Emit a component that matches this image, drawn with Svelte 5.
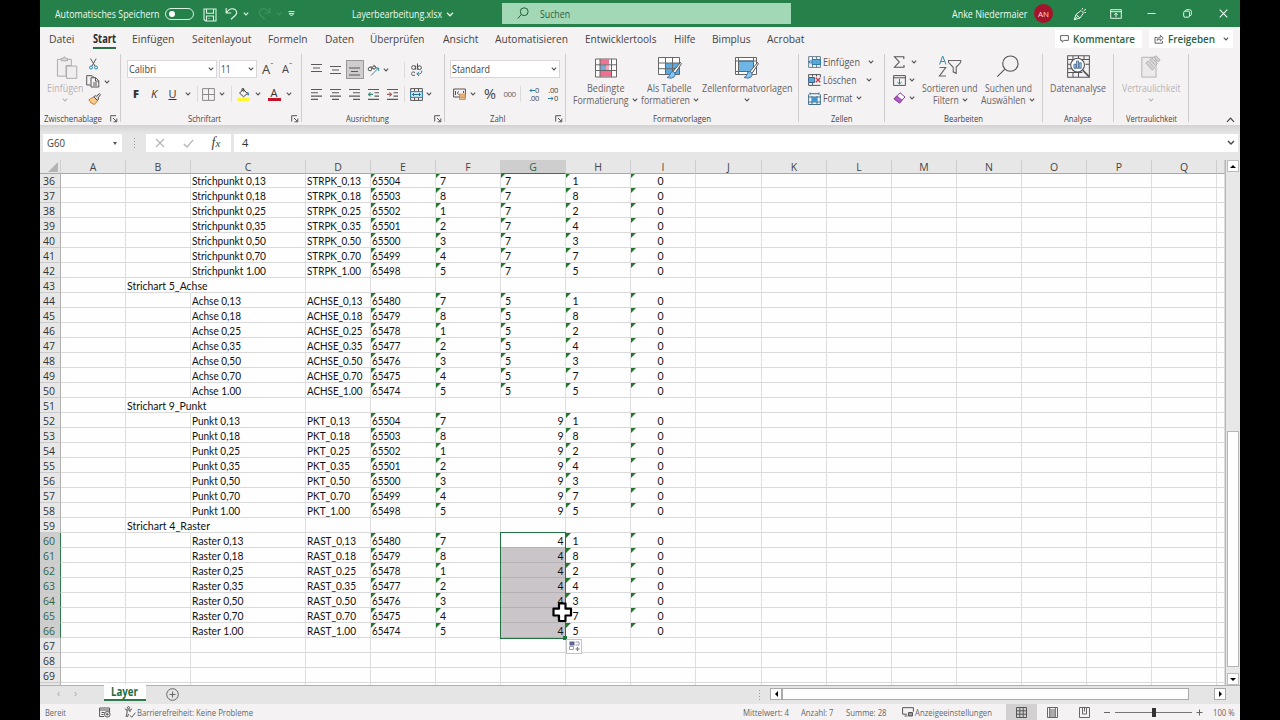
<script>
  // Narrows or widens a label horizontally so it spans the given width.
  function fit(node, w) {
    if (!w) return;
    const cur = node.getBoundingClientRect().width;
    node.style.width = w + 'px';
    node.style.transform = `scaleX(${(w / cur).toFixed(4)})`;
  }

  const tabs = [
    ['Datei', 25.5], ['Start', 23], ['Einfügen', 42.5], ['Seitenlayout', 59.5], ['Formeln', 39.5],
    ['Daten', 29], ['Überprüfen', 54.5], ['Ansicht', 35.5], ['Automatisieren', 73], ['Entwicklertools', 71.5],
    ['Hilfe', 21.5], ['Bimplus', 38.5], ['Acrobat', 37.5]
  ];

  const cols = 'ABCDEFGHIJKLMNOPQ'.split('');
  const sizes = ['0,13', '0.18', '0.25', '0.35', '0.50', '0.70', '1.00'];
  const fs = ['7', '8', '1', '2', '3', '4', '5'];
  const hs = ['1', '8', '2', '4', '3', '7', '5'];
  const e1 = ['65504', '65503', '65502', '65501', '65500', '65499', '65498'];
  const e2 = ['65480', '65479', '65478', '65477', '65476', '65475', '65474'];

  function block(start, name, cw, code, dw, es, g, textG) {
    return sizes.map((s, i) => ({
      n: start + i, c: name + ' ' + (i < 6 ? s.replace('.', ',') : s), cw, d: code + '_' + s, dw,
      e: es[i], f: fs[i], g, textG, h: hs[i], i: '0', sel: start === 60, first: start === 60 && i === 0
    }));
  }
  const rows = [
    ...block(36, 'Strichpunkt', 74, 'STRPK', 54, e1, '7', true),
    { n: 43, b: 'Strichart 5_Achse', bw: 80.5 },
    ...block(44, 'Achse', 49, 'ACHSE', 55.5, e2, '5', true),
    { n: 51, b: 'Strichart 9_Punkt', bw: 79.5 },
    ...block(52, 'Punkt', 48, 'PKT', 43, e1, '9', false),
    { n: 59, b: 'Strichart 4_Raster', bw: 83 },
    ...block(60, 'Raster', 51.5, 'RAST', 49, e2, '4', false),
    { n: 67 }, { n: 68 }, { n: 69 }, { n: '' }
  ];
  const blanks = [0, 1, 2, 3, 4, 5, 6, 7, 8];
</script>

{#snippet t(text, w, cls = '')}<span class="t {cls}" use:fit={w}>{text}</span>{/snippet}
{#snippet chev()}<svg class="chev" width="6" height="4" viewBox="0 0 6 4"><path d="M.8.7 3 2.9 5.2.7" fill="none" stroke="currentColor" stroke-width="1.1" /></svg>{/snippet}
{#snippet launcher()}<svg class="launch" width="8" height="8" viewBox="0 0 8 8"><path d="M.7 6.5V.7H6M3 3l3.600 3.600M6.800 3.500v3.300H3.600" fill="none" stroke="#555" /></svg>{/snippet}
{#snippet lines(a, b, c)}<svg width="13" height="13" viewBox="0 0 13 13"><path d={a} stroke="#5a5859" stroke-width="1.1" fill="none" />{#if b}<path d={b} stroke={c} stroke-width="1.1" fill="none" />{/if}</svg>{/snippet}
{#snippet tri()}<i class="tri"></i>{/snippet}

<div class="stage">
  <div class="app">
    <header class="title">
      <div class="tl">
        {@render t('Automatisches Speichern', 104.5)}
        <span class="toggle"></span>
        <svg class="save" width="14" height="14" viewBox="0 0 14 14" fill="none" stroke="#d9f3e2" stroke-width="1.1"><path d="M1 1h12v12H2.500L1 11.500zM3.500 1v4.300h7V1M3.500 13V8h7v5M5.500 10.500h1" /></svg>
        <svg class="undo" width="13" height="13" viewBox="0 0 13 13" fill="none" stroke="#d9f3e2" stroke-width="1.2"><path d="M1.200 1v5h5M1.500 5.800C3.500 2.500 6 1.300 8.500 1.900c3.500.9 4 4.300 2 6.300L6 12.300" /></svg>
        <span class="c1">{@render chev()}</span>
        <svg class="redo" width="13" height="13" viewBox="0 0 13 13" fill="none" stroke="#41925f" stroke-width="1.2"><path d="M11.800 1v5h-5M11.500 5.800C9.500 2.500 7 1.300 4.500 1.900c-3.500.9-4 4.300-2 6.300L7 12.300" /></svg>
        <span class="c2">{@render chev()}</span>
        <svg class="qat" width="7" height="6" viewBox="0 0 7 6" fill="none" stroke="#d9f3e2"><path d="M.5.600h6M1.200 2.600h4.600L3.500 5z" /></svg>
      </div>
      <div class="file">{@render t('Layerbearbeitung.xlsx', 90)}<svg width="8" height="5" viewBox="0 0 8 5"><path d="M1 .8 4 3.800 7 .8" fill="none" stroke="#e4f6ea" stroke-width="1.300" /></svg></div>
      <div class="search">
        <svg width="12" height="13" viewBox="0 0 12 13" fill="none" stroke="#1f5f38"><circle cx="7.200" cy="4.700" r="3.900" /><path d="M4.300 7.500.8 11.500" /></svg>
        {@render t('Suchen', 30)}
      </div>
      <div class="user">{@render t('Anke Niedermaier', 75.5)}<span class="avatar">AN</span></div>
      <div class="winbtns">
        <svg width="14" height="14" viewBox="0 0 14 14" fill="none" stroke="#e4f6ea"><path d="M1.200 12.800 3 7.500 8 3.500l2.500 2.500-3.500 5zM3 7.500l4 3.500M1.200 12.800l3.500-3.300M9 2.500l.8-1.500M10.500 4l2.500-2M11.500 5.500h1.500" /></svg>
        <svg width="12" height="10" viewBox="0 0 12 10" fill="none" stroke="#e4f6ea"><path d="M.7.700h10.600v8.600H.7zM.7 2.700h10.600M6 8.200V4.300M4.200 5.900 6 4.200l1.800 1.700" /></svg>
        <svg width="9" height="3" viewBox="0 0 9 3" stroke="#e4f6ea"><path d="M.5 1.500h8" /></svg>
        <svg width="9" height="9" viewBox="0 0 9 9" fill="none" stroke="#e4f6ea"><rect x=".7" y="2.200" width="5.800" height="6" rx="1.200" /><path d="M2.500 2V1.500Q2.600.7 3.500.7h3q1.800 0 1.800 1.800v3q0 1-1.200 1.200" /></svg>
        <svg width="9" height="9" viewBox="0 0 9 9" stroke="#f0fff5" stroke-width="1.100"><path d="m.7.700 7.600 7.600M8.300.7.700 8.300" /></svg>
      </div>
    </header>

    <nav class="tabs">
      {#each tabs as [name, w]}<div class:active={name === 'Start'}>{@render t(name, w)}</div>{/each}
      <button class="share kom"><svg width="9" height="8" viewBox="0 0 9 8" fill="none" stroke="#666"><path d="M.6.600h7.800v4.800H4L2.200 7.200V5.400H.6z" /></svg>{@render t('Kommentare', 62)}</button>
      <button class="share frei"><svg width="10" height="10" viewBox="0 0 10 10" fill="none" stroke="#666"><path d="M3.500 3.500H1v5.700h7.500V7M3 6.500C3.300 4.500 4.500 3.500 6.300 3.500V1.200L9.300 4.200l-3 2.800V5.200C5 5.200 4 5.500 3 6.500z" /></svg>{@render t('Freigeben', 47)}<span class="fc">{@render chev()}</span></button>
    </nav>

    <section class="ribbon">
      <div class="group g1">
        <div class="body clip">
          <div class="big dis">
            <svg width="22" height="24" viewBox="0 0 22 24" fill="#f0eeef" stroke="#a9a7a8"><path d="M1 3.500h14.500V10H10v11H1z" /><path d="M5 5V2.500h1.800Q8.200-.8 9.700 2.500h1.800V5z" fill="#d8d6d7" /><path d="M10.500 10.500h10.700v12.800H10.500z" /></svg>
            {@render t('Einfügen', 36.5)}
            {@render chev()}
          </div>
          <div class="stack">
            <svg width="9" height="12" viewBox="0 0 9 12" fill="none" stroke="#555"><path d="M1.500.6 6 8M7.200.6 3 8" /><circle cx="2" cy="9.500" r="1.500" stroke="#2b83b5" /><circle cx="7" cy="9.500" r="1.500" stroke="#2b83b5" /></svg>
            <div><svg width="14" height="13" viewBox="0 0 14 13" fill="none" stroke="#555"><path d="M4.500 10H.7V.7h5.500l2 2" /><path d="M5 2.700h4.800l3 3V12H5zM9.500 2.900v3.200h3.200M7 8h4M7 10h4" /></svg>{@render chev()}</div>
            <svg width="13" height="12" viewBox="0 0 13 12"><path d="m.8 6.800 5-3 3.800 4-3.200 3.700Q2.800 11 .8 6.800z" fill="#f6c98e" stroke="#c98235" /><path d="m5.800 3.800 1.500-1.200 1.200.5L11.500.6l1 1L10.200 4.800l.4 1.200-1.100 1.500z" fill="#ddd" stroke="#555" /></svg>
          </div>
        </div>
        <div class="glabel">{@render t('Zwischenablage', 58)}{@render launcher()}</div>
      </div>

      <div class="group g2">
        <div class="body two">
          <div class="r">
            <span class="combo w90">{@render t('Calibri', 27)}{@render chev()}</span>
            <span class="combo w38">{@render t('11', 9.500)}{@render chev()}</span>
            <b class="fa">A<sup>ˆ</sup></b><b class="fb">A<sup>ˇ</sup></b>
          </div>
          <div class="r fontrow">
            <b>F</b><i>K</i><u>U</u>{@render chev()}<s></s>
            <svg width="13" height="13" viewBox="0 0 13 13" fill="none" stroke="#8a8889"><path d="M.6.600h11.800v11.800H.6zM6.500.6v12M.6 6.500h12" /></svg>
            {@render chev()}<s></s>
            <svg width="13" height="13" viewBox="0 0 13 13"><path d="m2.500 5 4-3.500 3.800 4-3.800 3.300zM5 3V.8q1-.8 1.800 0v3" fill="none" stroke="#444" /><path d="m10.500 4.200 1 3" stroke="#2b6cb0" stroke-width="1.500" /><path d="M.5 9.800h12V13H.5z" fill="#fdf733" /></svg>
            {@render chev()}
            <span class="fcol">A</span>
            {@render chev()}
          </div>
        </div>
        <div class="glabel">{@render t('Schriftart', 33)}{@render launcher()}</div>
      </div>

      <div class="group g3">
        <div class="body two">
          <div class="r alrow">
            {@render lines('M1 1.500h11M3 5h7M1 8.500h11')}
            {@render lines('M1 3.500h11M3 7h7M1 10.500h11')}
            <span class="on">{@render lines('M1 5h11M3 8.500h7M1 12h11')}</span>
            <svg width="13" height="12" viewBox="0 0 13 12" fill="none" stroke="#555"><circle cx="3" cy="5" r="1.800" /><path d="M3.500 2 6.500 5M6.500.8l3 3" /><circle cx="7" cy="3.600" r="1.500" /><path d="m4 11.500 7.500-7.500M8.500 4h3.200v3" stroke="#3c8a8f" /></svg>
            {@render chev()}<s></s>
            <svg width="13" height="14" viewBox="0 0 13 14" fill="none" stroke="#555"><circle cx="3.500" cy="4.500" r="1.900" /><path d="M5.700 2.500v4.300M7.500.5v6.300M5 9.500Q2 8 1.500 10.700 2 13.500 5 12" /><circle cx="9.500" cy="4.700" r="1.900" /><path d="M11.800 7.500q.6 3.800-4.500 3.500M9 8.800 6.800 11 9 13" stroke="#2b7fa8" /></svg>
          </div>
          <div class="r alrow">
            {@render lines('M1 1.500h11M1 4.800h7M1 8.100h11M1 11.400h7')}
            {@render lines('M1 1.500h11M3 4.800h7M1 8.100h11M3 11.400h7')}
            {@render lines('M1 1.500h11M5 4.800h7M1 8.100h11M5 11.400h7')}
            {@render lines('M1 1.500h11M7.500 4.800H12M7.500 8.100H12M1 11.400h11', 'M1.500 6.400H6M3.500 4.400l-2 2 2 2', '#3c8a7a')}
            {@render lines('M1 1.500h11M7.500 4.800H12M7.500 8.100H12M1 11.400h11', 'M1 6.400h4.500M3.500 4.400l2 2-2 2', '#a05c5c')}
            <s></s>
            <svg width="13" height="13" viewBox="0 0 13 13" fill="none"><path d="M.6.600h11.800v11.800H.6zM4.500.6v3M8.500.6v3M4.500 9.500v3M8.500 9.500v3" stroke="#555" /><path d="M.6 3.600h11.800v5.800H.6z" fill="#cfe8f3" stroke="#2b7fa8" /><path d="M2.500 6.500h8M4 5 2.500 6.500 4 8M9 5l1.500 1.500L9 8" stroke="#2b6f98" /></svg>
            {@render chev()}
          </div>
        </div>
        <div class="glabel">{@render t('Ausrichtung', 43)}{@render launcher()}</div>
      </div>

      <div class="group g4">
        <div class="body two">
          <div class="r"><span class="combo w110">{@render t('Standard', 38)}{@render chev()}</span></div>
          <div class="r numrow">
            <svg width="13" height="12" viewBox="0 0 13 12" fill="none"><path d="M.6 1h11.800v8H.6z" stroke="#555" /><path d="M2.500 3v4M5.500 3.300q-2 1.700 0 3.400M10.500 3v2" stroke="#555" /><path d="M6.500 6.200h5.800v5.200H6.500zM6.500 8h5.800M6.500 9.700h5.800" fill="#f9d9b2" stroke="#d28844" /></svg>
            {@render chev()}<span class="pct">%</span><span class="ooo">000</span><s></s>
            <span class="dec"><span><svg width="6" height="5" viewBox="0 0 6 5"><path d="M6 2.500H1M2.700.8 1 2.500l1.700 1.700" fill="none" stroke="#2b7fa8" /></svg>0</span><span>.00</span></span>
            <span class="dec"><span>.00</span><span><svg width="6" height="5" viewBox="0 0 6 5"><path d="M0 2.500h5M3.300.8 5 2.500 3.300 4.200" fill="none" stroke="#2b7fa8" /></svg>0</span></span>
          </div>
        </div>
        <div class="glabel">{@render t('Zahl', 15.500)}{@render launcher()}</div>
      </div>

      <div class="group g5">
        <div class="body three">
          <div class="big">
            <svg width="22" height="19" viewBox="0 0 22 19"><path d="M.5.500h21v18H.5z" fill="#fff" /><path d="M5 1h9v5H5zM5 12h11v6H5z" fill="#f2708f" /><path d="M5 6.500h6v5H5z" fill="#7ba7d8" /><path d="M11 6.500h3v5h-3z" fill="#f5a5b8" /><path d="M.5.500h21v18H.5zM5 .5v18M16.500.5v18M.5 6.300h21M.5 12h21" fill="none" stroke="#666" /></svg>
            {@render t('Bedingte', 37.500)}
            <div>{@render t('Formatierung', 55.500)}{@render chev()}</div>
          </div>
          <div class="big">
            <svg width="24" height="22" viewBox="0 0 24 22"><path d="M.5.500h21v17H.5z" fill="#fff" /><path d="M7.500 6h14v11.500h-14z" fill="#5aa9e0" /><path d="M.5.500h21v17H.5zM7.500.5v17M14.500.5v17M.5 6h21M.5 11.700h21" fill="none" stroke="#666" /><path d="M22.500 5.500 15 14.500l2 1.800 6.400-9.500z" fill="#fff" stroke="#555" /><path d="M15 14.500q-3 0-3 3-1 2.500-3 3 5 1.500 7-.5 1.500-1.500 1-3.700z" fill="#8cc6ee" stroke="#3578ad" /></svg>
            {@render t('Als Tabelle', 44.500)}
            <div>{@render t('formatieren', 49)}{@render chev()}</div>
          </div>
          <div class="big">
            <svg width="24" height="22" viewBox="0 0 24 22"><path d="M.5.500h21v17H.5z" fill="#fff" /><path d="M3.500 4h15v10.500h-15z" fill="#6fb5e6" stroke="#3578ad" /><path d="M.5.500h21v17H.5zM3.500.5v17M18.500.5v6M.5 4h21M.5 14.500h10" fill="none" stroke="#666" /><path d="M22.500 5.500 15 14.500l2 1.800 6.400-9.500z" fill="#fff" stroke="#555" /><path d="M15 14.500q-3 0-3 3-1 2.500-3 3 5 1.500 7-.5 1.500-1.500 1-3.700z" fill="#8cc6ee" stroke="#3578ad" /></svg>
            {@render t('Zellenformatvorlagen', 90.500)}
            <div>{@render chev()}</div>
          </div>
        </div>
        <div class="glabel">{@render t('Formatvorlagen', 58)}</div>
      </div>

      <div class="group g6">
        <div class="body list">
          <div><svg width="13" height="12" viewBox="0 0 13 12" fill="none"><path d="M.6.600h11.800v10.800H.6zM4.500.6v11M8.500.6v11" stroke="#6a8190" /><path d="M4 3.500h8.500v5H4z" fill="#58a6d6" stroke="#2f7caf" /><path d="M4 6H.8M2.500 4.200.8 6l1.700 1.700" stroke="#2f7caf" /></svg>{@render t('Einfügen', 37)}<span class="k1">{@render chev()}</span></div>
          <div><svg width="13" height="12" viewBox="0 0 13 12" fill="none"><path d="M.6 3V.6h11.800V3M.6 9v2.400h11.800M4.500.6v2M8.500.6v2M4.500 9v2.500" stroke="#555" /><path d="M.6 3.500h6v5h-6z" fill="#58a6d6" stroke="#3b5f86" /><path d="m7.800 3.800 4.500 4.500M12.300 3.800 7.800 8.300" stroke="#c63a4a" stroke-width="1.300" /></svg>{@render t('Löschen', 33.500)}<span class="k2">{@render chev()}</span></div>
          <div><svg width="13" height="13" viewBox="0 0 13 13" fill="none"><path d="M.6 2.500v10h11.800v-10M4 4v8.500M9 4v8.500M.6 5h11.800M.6 10h11.800M2 .5v2.500M11 .5v2.500M2 1.700h9" stroke="#44708c" /><path d="M4 5h5v5H4z" fill="#3f96d0" /></svg>{@render t('Format', 29.500)}<span class="k3">{@render chev()}</span></div>
        </div>
        <div class="glabel">{@render t('Zellen', 21.500)}</div>
      </div>

      <div class="group g7">
        <div class="body edit">
          <div class="list sm">
            <div><svg width="13" height="12" viewBox="0 0 13 12" fill="none" stroke="#555" stroke-width="1.100"><path d="M10.800 3V.8H1.500L6.300 6l-4.800 5.200h9.500V9" /></svg><span class="k4">{@render chev()}</span></div>
            <div><svg width="13" height="11" viewBox="0 0 13 11" fill="none"><path d="M.6.600h11.800v9.800H.6zM.6 2.800h11.800" stroke="#555" /><path d="M6.500 4v5M4.300 7l2.200 2 2.200-2" stroke="#2a8395" /></svg><span class="k5">{@render chev()}</span></div>
            <div><svg width="13" height="12" viewBox="0 0 13 12"><path d="M7 .8 12 5 6.500 11 1 6.800z" fill="#fff" stroke="#8c3f9e" /><path d="M3.800 4 1 6.800 6.500 11 9 8.200z" fill="#b35cc4" stroke="#8c3f9e" /></svg><span class="k5">{@render chev()}</span></div>
          </div>
          <div class="big">
            <svg width="24" height="23" viewBox="0 0 24 23" fill="none" stroke="#666"><path d="M1.500 9.500 4.700 1 8 9.500M2.700 6.500h4" stroke="#3a87a8" /><path d="M1.500 12.500h6.200L1.500 21h6.500" stroke-width="1.200" /><path d="M10.500 5.500h12.200v1.800l-4.500 5v6l-3-1.500v-4.500l-4.700-5z" stroke-width="1.100" /></svg>
            {@render t('Sortieren und', 55.500)}
            <div>{@render t('Filtern', 26)}{@render chev()}</div>
          </div>
          <div class="big">
            <svg width="24" height="24" viewBox="0 0 24 24" fill="none" stroke="#555" stroke-width="1.200"><circle cx="14.500" cy="9" r="8" /><path d="M8.500 15 .8 22.500" /></svg>
            {@render t('Suchen und', 47)}
            <div>{@render t('Auswählen', 44.500)}{@render chev()}</div>
          </div>
        </div>
        <div class="glabel">{@render t('Bearbeiten', 39)}</div>
      </div>

      <div class="group g8">
        <div class="body one">
          <div class="big">
            <svg width="25" height="25" viewBox="0 0 25 25" fill="none"><path d="M.7.700h23.600v23.600H.7zM.7 5h23.600M.7 19h16M6.500.7V5M12.500.7V5M18.500.7V5M6.500 19v5M12.500 19v5M.7 10h4M.7 15h4M20 10h4" stroke="#56545a" stroke-width="1.100" /><circle cx="11.500" cy="11" r="7.500" fill="#fff" stroke="#56545a" stroke-width="1.200" /><path d="M7.500 10h2.300v4.500H7.500zM10.300 6.500h2.300v8h-2.300zM13.200 8.500h2.300v6h-2.300z" fill="#9cc4ea" stroke="#3f5f85" stroke-width=".8" /><path d="m17 16.500 7 7" stroke="#56545a" stroke-width="1.800" /></svg>
            {@render t('Datenanalyse', 56)}
          </div>
        </div>
        <div class="glabel">{@render t('Analyse', 27.500)}</div>
      </div>

      <div class="group g9">
        <div class="body one">
          <div class="big dis">
            <svg width="22" height="25" viewBox="0 0 22 25" fill="#eceaeb" stroke="#b0aeaf"><path d="M1 2.500h15.500v21.500H1z" /><path d="m5.500 9 2.500-2.500 7 7-2.500 3zM9.500 5.500 12 3l6 6-2 2.500zM14 2.500 16.500.8 21 5.500l-2 2z" fill="#d2d0d1" /></svg>
            {@render t('Vertraulichkeit', 58.500)}
            <div>{@render chev()}</div>
          </div>
        </div>
        <div class="glabel">{@render t('Vertraulichkeit', 51)}</div>
      </div>
      <svg class="collapse" width="9" height="6" viewBox="0 0 9 6"><path d="M1 4.800 4.500 1.200 8 4.800" fill="none" stroke="#444" stroke-width="1.200" /></svg>
    </section>

    <div class="formula">
      <div class="namebox">{@render t('G60', 18)}<i class="down"></i></div>
      <div class="grip"><i></i><i></i><i></i><i></i></div>
      <div class="fx">
        <svg width="10" height="10" viewBox="0 0 10 10"><path d="m1 1 8 8M9 1 1 9" stroke="#b5b5b5" stroke-width="1.200" /></svg>
        <svg width="11" height="9" viewBox="0 0 11 9"><path d="M.8 5 4 8 10.200.8" fill="none" stroke="#b5b5b5" stroke-width="1.300" /></svg>
        <span><i>f</i><small>x</small></span>
      </div>
      <div class="input"><span>4</span><svg width="8" height="6" viewBox="0 0 8 6"><path d="M1 1l3 3 3-3" fill="none" stroke="#444" stroke-width="1.400" /></svg></div>
    </div>

    <main class="mid">
      <div class="sheet">
        <div class="row head">
          <div class="corner"><i></i></div>
          {#each cols as c}<div class:gsel={c === 'G'}>{c}</div>{/each}
          <div></div>
        </div>
        <div class="rows">
          {#each rows as r}
            <div class="row" class:hl={r.sel}>
              <div class="rh">{r.n}</div>
              <div></div>
              <div class:over={r.b}>{#if r.b}{@render t(r.b, r.bw)}{/if}</div>
              <div class="cc">{#if r.c}{@render t(r.c, r.cw)}{/if}</div>
              <div>{#if r.d}{@render t(r.d, r.dw)}{/if}</div>
              <div>{#if r.e}{@render tri()}{@render t(r.e, 28.500)}{/if}</div>
              <div class="cf">{#if r.f}{@render tri()}{r.f}{/if}</div>
              <div class="cg" class:num={!r.textG} class:sel={r.sel} class:first={r.first}>{#if r.g}{#if r.textG}{@render tri()}{/if}{r.g}{/if}</div>
              <div class="ch">{#if r.h}{@render tri()}{r.h}{/if}</div>
              <div class="ci">{#if r.i}{@render tri()}{r.i}{/if}</div>
              {#each blanks as _}<div></div>{/each}
            </div>
          {/each}
          <div class="selbox"></div>
          <div class="paste"><svg width="11" height="11" viewBox="0 0 11 11"><path d="M.5.500h5v4h-5z" fill="#5f6390" /><path d="M.5 5.500h4v3h-4zM6.500 1h3.500v3H6.500" fill="none" stroke="#9a9cb8" /><path d="M8.500 6v4M6.500 8h4" stroke="#777" stroke-width="1.200" /></svg></div>
          <svg class="cursor" width="21" height="21" viewBox="0 0 21 21"><path d="M7 1.500h6.500v5.200h5.500v6.800h-5.500v5.500H7v-5.500H1.500V6.700H7z" fill="#fff" stroke="#000" stroke-width="2.200" stroke-linejoin="round" /></svg>
        </div>
      </div>
      <div class="vscroll"><b><i class="up"></i></b><div class="track"><div></div></div><b><i class="dn"></i></b></div>
    </main>

    <div class="sheettabs">
      <span class="arr">‹</span><span class="arr">›</span>
      <div class="stab">{@render t('Layer', 27)}</div>
      <svg class="plus" width="13" height="13" viewBox="0 0 13 13" fill="none" stroke="#666"><circle cx="6.500" cy="6.500" r="5.800" /><path d="M6.500 3.500v6M3.500 6.500h6" /></svg>
      <div class="grip"><i></i><i></i><i></i><i></i></div>
      <div class="hscroll"><b><i class="lf"></i></b><div class="thumb"></div><b class="end"><i class="rt"></i></b></div>
    </div>

    <footer class="status">
      <span class="s1">{@render t('Bereit', 21)}</span>
      <svg class="s2" width="12" height="11" viewBox="0 0 12 11" fill="none" stroke="#555"><path d="M5 9.500H.6V1h10v4M.6 3h10M2.500 5.500h3M2.500 7.500h2" /><circle cx="8.300" cy="7.300" r="2.800" /><circle cx="8.300" cy="7.300" r=".8" fill="#555" /></svg>
      <svg class="s3" width="12" height="12" viewBox="0 0 12 12" fill="none" stroke="#555"><circle cx="4.500" cy="1.700" r="1.100" /><path d="M.8 2.500Q2 4 3 4v3l-1 4M8.200 2.500Q7 4 6 4v2M3 4h3M3.500 11l1-3M6 9.500l1.800 1.700 3.600-4.500" /></svg>
      <span class="s4">{@render t('Barrierefreiheit: Keine Probleme', 116)}</span>
      <span class="s5">{@render t('Mittelwert: 4', 46)}</span>
      <span class="s6">{@render t('Anzahl: 7', 32.500)}</span>
      <span class="s7">{@render t('Summe: 28', 40.500)}</span>
      <svg class="s8" width="12" height="10" viewBox="0 0 12 10" fill="none" stroke="#555"><path d="M5 7.200H.6V.7h10.800v4M2.500 9h3" /><path d="M6.500 5.500h4v3.500h-4z" fill="#999" /></svg>
      <span class="s9">{@render t('Anzeigeeinstellungen', 77)}</span>
      <div class="views">
        <span class="act"><svg width="11" height="11" viewBox="0 0 11 11" fill="none" stroke="#555"><path d="M.5.500h10v10H.5zM.5 3.800h10M.5 7.200h10M3.800.5v10M7.200.5v10" /></svg></span>
        <span><svg width="11" height="11" viewBox="0 0 11 11" fill="none" stroke="#666"><path d="M.5.500h10v10H.5zM2.700 1v9M8.300 1v9M3 3h5M3 5h5M3 7h5M3 9h5" /></svg></span>
        <span><svg width="11" height="11" viewBox="0 0 11 11" fill="none" stroke="#666"><path d="M.5.500h10v10H.5zM3.500.5v6.500h4V.5M5.500.5v4" /></svg></span>
      </div>
      <div class="zoom"><i class="mn"></i><div class="line"><i></i></div><svg class="pl" width="7" height="7" viewBox="0 0 7 7"><path d="M3.500.5v6M.5 3.500h6" stroke="#666" /></svg>{@render t('100 %', 21.500)}</div>
    </footer>
  </div>
</div>

<style>
  :global(body) { margin: 0; background: #000; }
  .stage { width: 1280px; height: 720px; display: flex; justify-content: center; overflow: hidden; background: #000; }
  .app { width: 1200px; height: 720px; display: flex; flex-direction: column; background: #e6e6e6; font: 10.500px/14px "Open Sans", "Noto Sans", sans-serif; color: #444; overflow: hidden; }
  .app * { box-sizing: border-box; }
  .t { white-space: nowrap; display: inline-block; flex: none; transform-origin: 0 50%; text-align: left; }
  svg { display: block; flex: none; }
  button { border: 0; font: inherit; padding: 0; }

  .title { height: 27px; flex: none; background: #26804a; color: #eefbf2; display: grid; grid-template-columns: 312px 150px 289px 161px 288px; align-items: center; }
  .tl { display: flex; align-items: center; padding-left: 15px; }
  .toggle { width: 29px; height: 12px; border: 1px solid #d9f3e2; border-radius: 6px; margin-left: 5px; display: flex; align-items: center; padding-left: 3px; }
  .toggle::before { content: ''; width: 6px; height: 6px; border-radius: 50%; background: #fff; }
  .save { margin-left: 9px; margin-top: 2px; }
  .undo { margin-left: 8px; }
  .c1 { margin-left: 5px; }
  .redo { margin-left: 9px; }
  .c2 { margin-left: 5px; color: #41925f; }
  .qat { margin-left: 6px; }
  .file { display: flex; align-items: center; gap: 4px; padding-top: 1px; }
  .search { height: 21px; background: #a3d8b7; color: #2c5f41; display: flex; align-items: center; padding-left: 15px; gap: 11px; font-size: 10.500px; }
  .user { display: flex; align-items: center; justify-content: flex-end; gap: 7px; width: 262px; margin-right: -101px; }
  .avatar { width: 19px; height: 19px; border-radius: 50%; background: #a4142c; color: #ffdce2; font-size: 8px; line-height: 19px; text-align: center; }
  .winbtns { display: grid; grid-template-columns: repeat(5, 35.800px); justify-items: center; align-items: center; padding-left: 110px; }

  .tabs { height: 25px; flex: none; background: #f5f2f3; display: grid; grid-template-columns: 44px 39px 59.500px 76.500px 56.500px 45.500px 72.500px 52px 90px 89px 38.500px 55px 288px 94px 84px; padding-left: 9px; font-size: 11.500px; line-height: 24px; }
  .active { font-weight: 700; color: #2b2b2b; width: 23px; height: 22px; border-bottom: 2px solid #2c6b46; }
  .share { background: #fff; height: 18px; margin-top: 3px; display: flex; align-items: center; color: #2a6244; font-weight: 600; font-size: 11px; line-height: 16px; }
  .kom { width: 87px; padding-left: 5px; gap: 4px; }
  .frei { padding-left: 5px; gap: 4px; }
  .fc { margin-left: auto; padding-right: 4px; color: #555; }

  .ribbon { height: 73px; flex: none; background: #f5f2f3; display: flex; padding-top: 2px; }
  .group { height: 68px; border-right: 1px solid #cfcccd; display: flex; flex-direction: column; flex: none; }
  .g1 { width: 81px; } .g2 { width: 181px; } .g3 { width: 143px; } .g4 { width: 121px; } .g5 { width: 233px; }
  .g6 { width: 86px; } .g7 { width: 158px; } .g8 { width: 71px; } .g9 { width: 75px; }
  .body { height: 58px; flex: none; }
  .glabel { height: 14px; line-height: 14px; font-size: 9.500px; color: #444; display: flex; justify-content: center; position: relative; flex: none; }
  .launch { position: absolute; right: 2px; top: 3px; }
  .g1 .glabel { padding-right: 14px; } .g2 .glabel { padding-left: 8px; padding-right: 22px; } .g3 .glabel { padding-right: 12px; } .g4 .glabel { padding-right: 14px; }
  .chev { color: #555; }
  .c1 .chev { color: #d9f3e2; } .c2 .chev { color: #41925f; }
  .big { display: flex; flex-direction: column; align-items: center; font-size: 10.500px; line-height: 12px; color: #666465; }
  .big > svg { height: 23px; margin-bottom: 4px; margin-top: 1px; }
  .big > div { display: flex; align-items: center; gap: 3px; height: 12px; }
  .big > .chev { margin: 4px 0 0; height: 4px; }
  .dis, .dis .chev { color: #b5b3b4; }
  .clip { display: flex; padding-left: 5px; }
  .clip .big { width: 40px; }
  .clip .big > svg { margin-top: 2px; margin-left: 3px; margin-bottom: 3px; }
  .clip .big > .chev { margin: 4px 0 0; }
  .stack { width: 28px; padding-top: 4px; display: flex; flex-direction: column; gap: 5px; }
  .stack > svg { margin-left: 4px; }
  .stack > svg:last-child { margin-left: 3px; }
  .stack > div { display: flex; align-items: center; gap: 4px; margin-left: 1px; }
  .two { padding-top: 6px; display: flex; flex-direction: column; gap: 7px; }
  .r { display: flex; height: 18px; align-items: center; padding-left: 6px; }
  .combo { height: 18px; background: #fff; border: 1px solid #d9d6d7; display: flex; align-items: center; justify-content: space-between; padding: 0 2px 0 1px; color: #444; font-size: 10.500px; }
  .w90 { width: 90px; } .w38 { width: 38px; margin-left: 2px; } .w110 { width: 110px; }
  .g4 .r:first-child { padding-left: 5px; }
  .fa, .fb { font-weight: 400; font-size: 13px; width: 14px; margin-left: 5px; display: flex; }
  .fb { font-size: 11px; margin-left: 6px; }
  .fa sup, .fb sup { font-size: 8px; line-height: 8px; margin-top: -1px; }
  .fontrow { display: grid; grid-template-columns: 18px 18px 19px 11px 8px 15px 12px 7px 17px 11px 22px 8px; justify-items: center; color: #333; font-size: 11px; }
  .fontrow b { font-weight: 800; }
  s { width: 1px; height: 16px; background: #dcd9da; display: block; }
  .fcol { width: 13px; height: 14px; line-height: 11px; text-align: center; font-size: 11px; border-bottom: 3px solid #c4142a; }
  .alrow { display: grid; padding-left: 5px; grid-template-columns: repeat(5, 19px) 5px 19px 9px; justify-items: center; }
  .alrow > .chev { justify-self: start; }
  .on { width: 18px; height: 19px; background: #cfcdce; border: 1px solid #999; display: flex; align-items: center; justify-content: center; }
  .numrow { display: grid; padding-left: 6px; grid-template-columns: 17px 10px 24px 15px 7px 19px 19px; justify-items: center; }
  .pct { font-size: 14.500px; } .ooo { font-size: 8px; letter-spacing: -.5px; color: #666; }
  .dec { display: flex; flex-direction: column; width: 11px; }
  .dec > span { display: flex; align-items: center; justify-content: flex-end; height: 8px; font-size: 7.500px; line-height: 8px; letter-spacing: -.3px; white-space: nowrap; }
  .three { display: grid; grid-template-columns: 64px 64px 91px; padding: 1px 0 0 7.500px; }
  .three .big > svg { height: 22px; margin: 2px 0 3px; }
  .list { display: flex; flex-direction: column; padding: 0 0 0 9px; gap: 4px; font-size: 10.500px; color: #5a5859; }
  .list > div { display: flex; align-items: center; gap: 2px; height: 14px; }
  .list > div:first-child { margin-top: 1px; }
  .k1 { margin-left: 6px; } .k2 { margin-left: 7px; } .k3 { margin-left: 1px; }
  .k4 { margin-left: 3px; } .k5 { margin-left: 1px; }
  .edit { display: grid; grid-template-columns: 36px 58px 58px; }
  .sm { padding-left: 8px; }
  .one .big { width: 70px; }
  .g9 .one .big { width: 74px; }
  .collapse { margin: 63px 0 0 37px; }

  .formula { height: 35px; flex: none; display: flex; padding: 9px 0 0 3px; background: linear-gradient(#d4d3d4 0, #e4e3e4 7px, #e6e6e6 9px); align-items: flex-start; }
  .formula > div { height: 18px; }
  .namebox { width: 79px; background: #fff; display: flex; justify-content: space-between; align-items: center; padding: 0 5px 0 4px; color: #444; }
  .down { border: 2.500px solid transparent; border-top: 3px solid #555; border-bottom: 0; }
  .grip { width: 24px; display: flex; flex-direction: column; align-items: center; justify-content: center; gap: 2px; }
  .grip i { width: 1px; height: 1px; background: #999; }
  .fx { width: 85px; background: #fff; display: grid; grid-template-columns: 28px 28px 28px; justify-items: center; align-items: center; font: 14px "Liberation Serif", serif; color: #444; }
  .fx i { font-style: italic; } .fx small { font-style: italic; font-size: 11px; }
  .input { flex: 1; margin: 0 2px 0 3px; background: #fff; display: flex; align-items: center; justify-content: space-between; padding: 0 3px 0 8px; color: #333; font-size: 11px; }

  .mid { height: 525px; flex: none; display: flex; }
  .sheet { width: 1186px; display: flex; flex-direction: column; border-right: 1px solid #b5b5b5; overflow: hidden; }
  .row { display: grid; grid-template-columns: 21px 65px 65px 115px repeat(6, 65px) 66px repeat(7, 65px) 8px; height: 15px; flex: none; }
  .row > div { border-right: 1px solid #dedede; border-bottom: 1px solid #dadada; height: 15px; line-height: 16px; padding-left: 1px; position: relative; white-space: nowrap; }
  .head { height: 14px; background: #e8e7e8; font-size: 10.500px; }
  .head > div { height: 14px; line-height: 14px; text-align: center; padding: 0; border-right: 1px solid #cdcdcd; border-bottom: 1px solid #a8a8a8; color: #444; }
  .row > .gsel { background: #cfcecf; color: #2d6647; border-bottom: 1px solid #2c7a4b; }
  .corner i { position: absolute; right: 2px; bottom: 1px; border-left: 10px solid transparent; border-bottom: 10px solid #b4b4b4; }
  .rows { height: 511px; overflow: hidden; background: #fefefe; position: relative; font: 10.500px/16px Lato, sans-serif; color: #111; display: flex; flex-direction: column; }
  .rows .row:first-child { margin-top: -1px; }
  .row > .rh { background: #e8e7e8; font: 10.500px/16px "Open Sans", sans-serif; padding: 0 0 0 3px; color: #333; border-right-color: #b0b0b0; border-bottom-color: #cacaca; }
  .hl > .rh { background: #cfcecf; color: #2d6647; border-right: 1px solid #2c7a4b; }
  .row > .over { border-right-color: transparent; z-index: 1; }
  .row > .cf { padding-left: 4px; }
  .row > .cg { padding-left: 4px; }
  .row > .ch { padding-left: 6.500px; }
  .row > .ci { padding-left: 26.500px; }
  .row > .num { text-align: right; padding: 0 1.500px 0 0; }
  .row > .sel { background: #c9c5c8; border-bottom-color: #b5b1b4; }
  .row > .first { background: #fff; }
  .tri { position: absolute; left: 0; top: 0; border-top: 5px solid #25762f; border-right: 5px solid transparent; }
  .selbox { position: absolute; left: 460px; top: 358px; width: 66px; height: 107px; border: 1px solid #21733f; }
  .selbox::after { content: ''; position: absolute; right: -2px; bottom: -2px; width: 4px; height: 4px; background: #21733f; }
  .paste { position: absolute; left: 526px; top: 465px; width: 16px; height: 15px; background: #fff; border: 1px solid #c5c5c5; padding: 1px 2px; }
  .cursor { position: absolute; left: 512px; top: 428px; }
  .vscroll { flex: 1; padding: 0 1px 0 1px; display: flex; flex-direction: column; background: #e9e8e9; }
  .vscroll b { height: 12px; background: #fff; border: 1px solid #bbb; display: flex; align-items: center; justify-content: center; }
  .track { flex: 1; padding: 259px 0 6px; }
  .track div { height: 236px; background: #fff; border: 1px solid #b5b5b5; }
  .up { border: 3px solid transparent; border-bottom: 3px solid #000; border-top: 0; }
  .dn { border: 3px solid transparent; border-top: 3px solid #000; border-bottom: 0; }
  .lf { border: 3px solid transparent; border-right: 3px solid #000; border-left: 0; }
  .rt { border: 3px solid transparent; border-left: 3px solid #000; border-right: 0; }

  .sheettabs { height: 19px; flex: none; display: flex; align-items: flex-start; background: #e6e5e6; border-top: 1px solid #b0b0b0; padding-left: 10px; }
  .arr { width: 17px; text-align: center; color: #aaa; line-height: 15px; }
  .stab { width: 42px; height: 16px; margin-left: 20px; margin-top: -1px; padding-right: 2px; background: #fff; border-bottom: 2px solid #2c7a4b; color: #1f6a3e; font-weight: 700; font-size: 11.500px; line-height: 14px; text-align: center; }
  .plus { margin: 2px 0 0 20px; }
  .sheettabs .grip { margin-left: 568px; height: 17px; }
  .hscroll { display: flex; width: 456px; margin-top: 2px; margin-left: -1px; height: 12px; }
  .hscroll b { width: 12px; background: #fff; border: 1px solid #aaa; display: flex; align-items: center; justify-content: center; }
  .thumb { width: 407px; background: #fff; border: 1px solid #aaa; }
  .hscroll .end { margin-left: 25px; }

  .status { height: 16px; flex: none; background: #f5f2f3; display: grid; grid-template-columns: 54px 25px 13px 606px 58px 45px 56px 13px 90px 92px auto; align-items: center; padding-left: 5px; font-size: 9.500px; color: #666; line-height: 15px; }
  .views { display: grid; grid-template-columns: 31px 31px 32px; height: 16px; margin-left: 1px; }
  .views span { display: flex; align-items: center; justify-content: center; }
  .views .act { background: #d2d0d1; }
  .zoom { display: flex; align-items: center; padding-left: 7px; }
  .mn { width: 6px; height: 1px; background: #666; flex: none; }
  .line { width: 77px; height: 1px; background: #777; margin-left: 5px; display: flex; align-items: center; padding-left: 37px; flex: none; }
  .line i { width: 4px; height: 9px; background: #333; flex: none; }
  .pl { margin: 0 10px 0 4px; }
</style>
